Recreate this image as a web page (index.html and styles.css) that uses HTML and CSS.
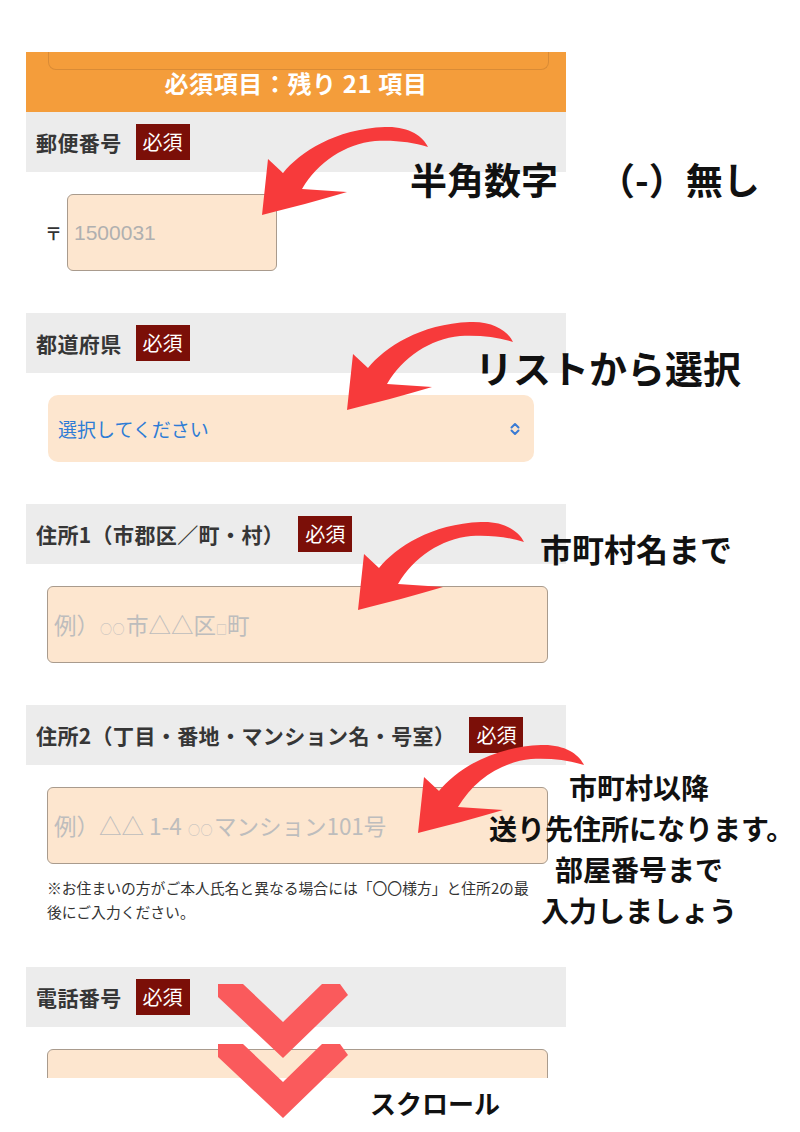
FILE: index.html
```html
<!DOCTYPE html>
<html lang="ja">
<head>
<meta charset="utf-8">
<title>住所入力</title>
<link rel="stylesheet" href="styles.css">
</head>
<body>
<div class="stage">
  <div class="app">
    <div class="banner">
      <div class="banner-prev"></div>
      <div class="banner-text">必須項目：残り 21 項目</div>
    </div>

    <section class="sec">
      <div class="sec-head"><span class="label">郵便番号</span><span class="badge">必須</span></div>
      <div class="field field-postal">
        <span class="zip-mark">〒</span>
        <div class="input input-zip"><span class="ph ph-num">1500031</span></div>
      </div>
    </section>

    <section class="sec">
      <div class="sec-head"><span class="label">都道府県</span><span class="badge">必須</span></div>
      <div class="field">
        <div class="select">
          <span class="select-text">選択してください</span>
          <svg class="select-icon" width="10" height="16" viewBox="0 0 10 16">
            <path d="M1.5 6.5 L5 3 L8.5 6.5 M1.5 9.5 L5 13 L8.5 9.5" fill="none" stroke="#3b7bd4" stroke-width="2" stroke-linecap="round" stroke-linejoin="round"/>
          </svg>
        </div>
      </div>
    </section>

    <section class="sec">
      <div class="sec-head"><span class="label">住所1（市郡区／町・村）</span><span class="badge">必須</span></div>
      <div class="field">
        <div class="input"><span class="ph">例）<span class="sm">○○</span>市△△区<span class="sq">□</span>町</span></div>
      </div>
    </section>

    <section class="sec">
      <div class="sec-head"><span class="label">住所2（丁目・番地・マンション名・号室）</span><span class="badge">必須</span></div>
      <div class="field field-note">
        <div class="input"><span class="ph">例）△△ 1-4 <span class="sm">○○</span>マンション101号</span></div>
        <p class="note">※お住まいの方がご本人氏名と異なる場合には「〇〇様方」と住所2の最後にご入力ください。</p>
      </div>
    </section>

    <section class="sec">
      <div class="sec-head"><span class="label">電話番号</span><span class="badge">必須</span></div>
      <div class="field">
        <div class="input"></div>
      </div>
    </section>
  </div>

  <svg class="overlay" width="800" height="1132" viewBox="0 0 800 1132">
    <defs>
      <path id="arw" d="M0,0 L6,-56 L21,-42 C38,-63 73,-86 123,-88 C146,-89 161,-79 166,-68 C150,-73 133,-75 113,-74 C83,-71 56,-53 40,-26 L85,-23 C58,-15 28,-7 0,0 Z"/>
      <path id="chev" d="M218,984 L243,984 L283,1022 L322,984 L340,984 L348,995 L283,1058 L218,997 Z"/>
    </defs>
    <g fill="#f73a3b">
      <use href="#arw" transform="translate(262,215)"/>
      <use href="#arw" transform="translate(347,410)"/>
      <use href="#arw" transform="translate(358,610)"/>
      <use href="#arw" transform="translate(418,833)"/>
    </g>
    <g fill="#fa5a5c">
      <use href="#chev"/>
      <use href="#chev" transform="translate(0,60)"/>
    </g>
  </svg>

  <div class="ann ann-1">半角数字<span class="ann-gap">（-）無し</span></div>
  <div class="ann ann-2">リストから選択</div>
  <div class="ann ann-3">市町村名まで</div>
  <div class="ann ann-4">市町村以降<br>送り先住所になります。<br>部屋番号まで<br>入力しましょう</div>
  <div class="ann ann-5">スクロール</div>
</div>
</body>
</html>
```

FILE: styles.css
```css
* { box-sizing: border-box; }
html, body { margin: 0; padding: 0; background: #fff; }
body {
  font-family: "Noto Sans CJK JP", "Noto Sans", sans-serif;
  width: 800px;
  height: 1132px;
  overflow: hidden;
}
.stage {
  position: relative;
  width: 800px;
  height: 1132px;
  padding-top: 52px;
}
.app {
  width: 540px;
  height: 1026px;
  margin-left: 26px;
  overflow: hidden;
}
.banner {
  position: relative;
  height: 60px;
  background: #f49d3b;
  display: flex;
  align-items: center;
  justify-content: center;
}
.banner-prev {
  position: absolute;
  left: 22px;
  right: 17px;
  top: 0;
  height: 18px;
  border: 1px solid #d98b36;
  border-top: none;
  border-radius: 0 0 8px 8px;
}
.banner-text {
  color: #fff;
  font-weight: 700;
  font-size: 24px;
  letter-spacing: 0.6px;
  line-height: 1;
  margin-top: 2px;
}
.sec-head {
  height: 60px;
  background: #ececec;
  display: flex;
  align-items: center;
  padding-left: 10px;
}
.label {
  font-size: 21px;
  font-weight: 700;
  color: #363636;
  line-height: 1;
  letter-spacing: 0.4px;
}
.badge {
  margin-left: 14px;
  background: #7b0f08;
  color: #fff;
  font-size: 20px;
  height: 36px;
  line-height: 36px;
  padding: 0 7px;
}
.field {
  padding: 22px 18px 42px 21px;
}
.field-postal {
  display: flex;
  align-items: center;
  padding-left: 19px;
}
.zip-mark {
  font-size: 17px;
  font-weight: 700;
  color: #333;
  margin-right: 5px;
}
.input {
  height: 77px;
  border: 1.5px solid #a99b8d;
  border-radius: 6px;
  background: #fde6cf;
  display: flex;
  align-items: center;
  padding-left: 6px;
}
.input-zip {
  width: 210px;
}
.ph {
  color: #bdbdbd;
  font-size: 22.5px;
  line-height: 1;
}
.ph .sm {
  font-size: 12px;
  letter-spacing: 0.5px;
  margin: 0 1px;
}
.ph .sq {
  font-size: 11px;
}
.ph-num {
  font-family: "Liberation Sans", "Noto Sans CJK JP", sans-serif;
  font-size: 21px;
  color: #b0b0b0;
}
.select {
  height: 67px;
  width: 486px;
  margin-left: 1px;
  border-radius: 10px;
  background: #fde6cf;
  display: flex;
  align-items: center;
  justify-content: space-between;
  padding: 0 14px 0 10px;
}
.select-text {
  color: #2e7cd6;
  font-size: 19px;
  line-height: 1;
}
.select-icon { display: block; }
.field-note { padding-bottom: 43px; }
.note {
  margin: 12px 12px 0 0;
  font-size: 14.8px;
  line-height: 24px;
  color: #333;
}
.overlay {
  position: absolute;
  left: 0;
  top: 0;
}
.ann {
  position: absolute;
  font-weight: 700;
  color: #111;
  line-height: 1;
  white-space: nowrap;
}
.ann-1 { left: 410px; top: 161px; font-size: 37px; }
.ann-gap { margin-left: 40px; }
.ann-2 { left: 475px; top: 348px; font-size: 38px; }
.ann-3 { left: 540px; top: 532px; font-size: 32px; }
.ann-4 {
  left: 489px;
  width: 300px;
  top: 767px;
  font-size: 28px;
  line-height: 41px;
  text-align: center;
}
.ann-5 { left: 370px; top: 1090px; font-size: 26px; }
```
